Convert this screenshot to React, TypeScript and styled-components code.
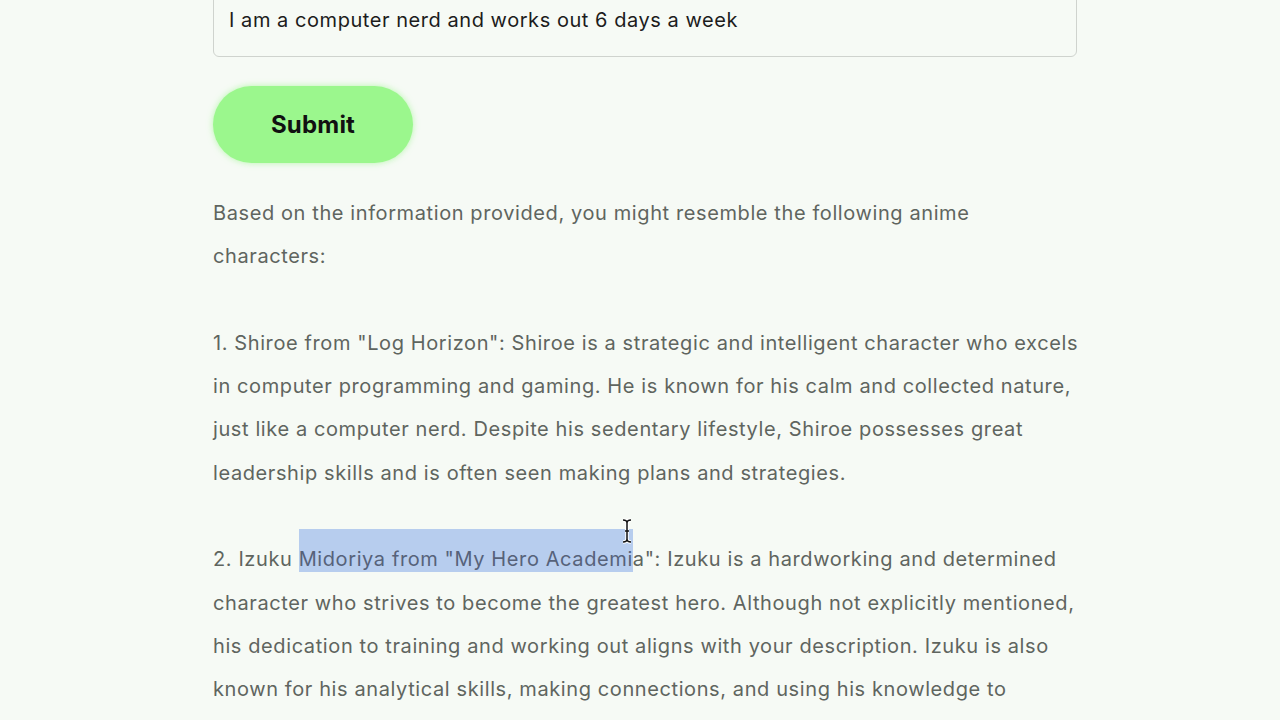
import React from 'react';
import styled, { createGlobalStyle } from 'styled-components';

const GlobalStyle = createGlobalStyle`
  html, body {
    margin: 0;
    background: #f6faf5;
    overflow: hidden;
  }
  body {
    padding: 0 0 0 10px;
    font-family: Inter, "Liberation Sans", sans-serif;
  }
`;

const Page = styled.main`
  width: 864px;
  margin: -23px auto 0;
  display: flex;
  flex-direction: column;
  align-items: flex-start;
`;

const InputBox = styled.div`
  box-sizing: border-box;
  width: 100%;
  height: 80px;
  padding: 30px 15px 0;
  border: 1px solid #cfd3ce;
  border-radius: 6px;
  background: #f6faf5;
  color: #1c1c1c;
  font-size: 20px;
  line-height: 24px;
  letter-spacing: 0.55px;
`;

const SubmitButton = styled.button`
  margin-top: 29px;
  width: 200px;
  height: 77px;
  border: none;
  border-radius: 40px;
  background: #9bf78d;
  box-shadow: 0 0 6px rgba(155, 247, 141, 0.7);
  color: #111;
  font-family: Inter, "Liberation Sans", sans-serif;
  font-size: 24px;
  font-weight: 700;
  letter-spacing: 0.2px;
  cursor: pointer;
`;

const Answer = styled.div`
  position: relative;
  margin-top: 29px;
  width: calc(100% + 6px);
  white-space: pre-wrap;
  color: #5f655f;
  font-size: 20px;
  line-height: 43.3px;
  letter-spacing: 0.6px;
`;

const Selected = styled.span`
  background: #b7cdee;
  padding: 18px 0 1px;
  color: #56627a;
`;

const Cursor = styled.svg`
  position: absolute;
  left: 408px;
  top: 326px;
  width: 12px;
  height: 26px;
`;

const beam = 'M2 2 Q6 2 6 5 Q6 2 10 2 M6 5 V21 M2 24 Q6 24 6 21 Q6 24 10 24 M4 13 H8';

const App = () => {
  return (
    <>
      <GlobalStyle />
      <Page>
        <InputBox>I am a computer nerd and works out 6 days a week</InputBox>
        <SubmitButton>Submit</SubmitButton>
        <Answer>
          {'Based on the information provided, you might resemble the following anime characters:\n\n'}
          {'1. Shiroe from "Log Horizon": Shiroe is a strategic and intelligent character who excels in computer programming and gaming. He is known for his calm and collected nature, just like a computer nerd. Despite his sedentary lifestyle, Shiroe possesses great leadership skills and is often seen making plans and strategies.\n\n'}
          {'2. Izuku '}
          <Selected>Midoriya from "My Hero Academi</Selected>
          {'a": Izuku is a hardworking and determined character who strives to become the greatest hero. Although not explicitly mentioned, his dedication to training and working out aligns with your description. Izuku is also known for his analytical skills, making connections, and using his knowledge to'}
          <Cursor viewBox="0 0 12 26">
            <path d={beam} fill="none" stroke="#fff" strokeWidth="3.5" />
            <path d={beam} fill="none" stroke="#111" strokeWidth="1.5" />
          </Cursor>
        </Answer>
      </Page>
    </>
  );
};

export default App;
